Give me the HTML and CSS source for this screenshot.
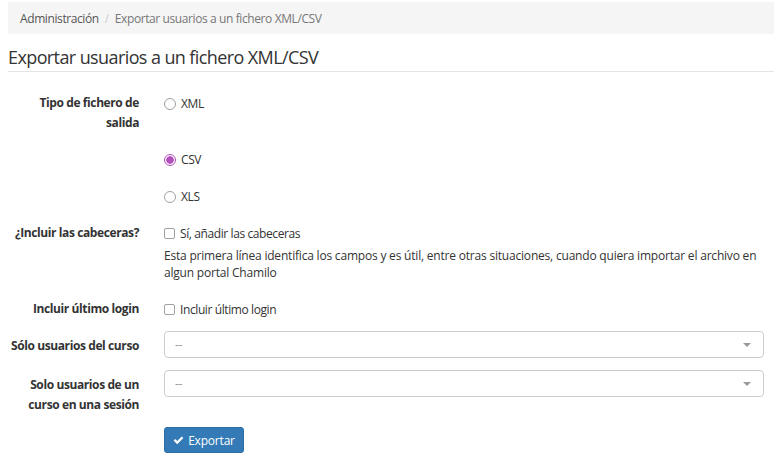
FILE: index.html
```html
<!DOCTYPE html>
<html>
<head>
    <title>Exportar usuarios a un fichero XML/CSV</title>
    <link rel="stylesheet" href="styles.css">
</head>
<body>
    <div class="page">
        <ol class="breadcrumb">
            <li><a href="#">Administración</a></li>
            <li class="active">Exportar usuarios a un fichero XML/CSV</li>
        </ol>

        <h2 class="page-title">Exportar usuarios a un fichero XML/CSV</h2>

        <form class="export-form" action="#" method="POST">
            <div class="form-group tall">
                <label class="control-label">Tipo de fichero de salida</label>
                <div class="controls">
                    <label class="radio"><input type="radio" name="file_type" value="xml"> XML</label>
                </div>
            </div>
            <div class="form-group">
                <label class="control-label"></label>
                <div class="controls">
                    <label class="radio"><input type="radio" name="file_type" value="csv" checked> CSV</label>
                </div>
            </div>
            <div class="form-group">
                <label class="control-label"></label>
                <div class="controls">
                    <label class="radio"><input type="radio" name="file_type" value="xls"> XLS</label>
                </div>
            </div>
            <div class="form-group">
                <label class="control-label">¿Incluir las cabeceras?</label>
                <div class="controls">
                    <label class="checkbox"><input type="checkbox" name="addcsvheader"> Sí, añadir las cabeceras</label>
                    <p class="help-block">Esta primera línea identifica los campos y es útil, entre otras situaciones, cuando quiera importar el archivo en algun portal Chamilo</p>
                </div>
            </div>
            <div class="form-group short">
                <label class="control-label">Incluir último login</label>
                <div class="controls">
                    <label class="checkbox"><input type="checkbox" name="include_last_login"> Incluir último login</label>
                </div>
            </div>
            <div class="form-group select-row">
                <label class="control-label">Sólo usuarios del curso</label>
                <div class="controls">
                    <div class="select-box"><span>--</span><i class="caret"></i></div>
                </div>
            </div>
            <div class="form-group select-row">
                <label class="control-label">Solo usuarios de un curso en una sesión</label>
                <div class="controls">
                    <div class="select-box"><span>--</span><i class="caret"></i></div>
                </div>
            </div>
            <div class="form-group">
                <label class="control-label"></label>
                <div class="controls">
                    <button type="submit" class="btn-primary">
                        <svg width="11" height="9" viewBox="0 0 11 9"><path d="M0.6 4.6 L2.2 3 L4.2 5 L8.8 0.4 L10.4 2 L4.2 8.2 Z" fill="#fff"/></svg>
                        Exportar
                    </button>
                </div>
            </div>
        </form>
    </div>
</body>
</html>
```

FILE: styles.css
```css
body {
    font-family: "Open Sans", "Noto Sans", sans-serif;
    font-size: 12px;
    letter-spacing: -0.4px;
    color: #333;
    background-color: #ffffff;
    margin: 0;
    padding: 0;
}

.page {
    padding: 2px 1px 0 8px;
}

.breadcrumb {
    list-style: none;
    margin: 0;
    padding: 0 12px;
    height: 32px;
    display: flex;
    align-items: center;
    background-color: #f5f5f5;
    border-radius: 2px;
}

.breadcrumb li {
    color: #777;
}

.breadcrumb li a {
    color: #555;
    text-decoration: none;
}

.breadcrumb li + li::before {
    content: "/";
    color: #ccc;
    padding: 0 6px;
}

.page-title {
    font-size: 18px;
    font-weight: normal;
    letter-spacing: -0.6px;
    margin: 10px 0 0 0;
    padding-bottom: 1px;
    line-height: 26px;
    border-bottom: 1px solid #e5e5e5;
}

.export-form {
    margin-top: 21px;
}

.form-group {
    display: flex;
    margin-bottom: 16px;
}

.control-label {
    width: 131px;
    flex-shrink: 0;
    text-align: right;
    font-weight: bold;
    line-height: 20px;
}

.controls {
    margin-left: 25px;
    width: 600px;
}

.radio,
.checkbox {
    display: flex;
    align-items: center;
    line-height: 21px;
}

input[type="radio"],
input[type="checkbox"] {
    appearance: none;
    margin: 0 5px 0 0;
    width: 12px;
    height: 12px;
    border: 1px solid #a0a0a0;
    background: #fff;
}

input[type="radio"] {
    border-radius: 50%;
}

input[type="radio"]:checked {
    border-color: #b34fbf;
    background: radial-gradient(circle, #b34fbf 0 3.5px, #fff 4px);
}

input[type="checkbox"] {
    border-radius: 2px;
    width: 11px;
    height: 11px;
}

.help-block {
    margin: 3px 0 2px 0;
    line-height: 17px;
    letter-spacing: -0.2px;
}

.form-group.short {
    margin-bottom: 11px;
}

.select-row {
    margin-bottom: 12px;
}

.select-row .control-label {
    padding-top: 5px;
}

.select-box {
    height: 27px;
    box-sizing: border-box;
    border: 1px solid #ccc;
    border-radius: 4px;
    display: flex;
    align-items: center;
    justify-content: space-between;
    padding: 0 12px 0 10px;
    color: #999;
}

.caret {
    width: 0;
    height: 0;
    border-left: 4px solid transparent;
    border-right: 4px solid transparent;
    border-top: 4px solid #999;
}

.btn-primary {
    background-color: #337ab7;
    border: 1px solid #2e6da4;
    border-radius: 3px;
    color: white;
    font-family: inherit;
    font-size: 12px;
    letter-spacing: -0.2px;
    height: 26px;
    width: 80px;
    padding: 0;
    display: flex;
    align-items: center;
    justify-content: center;
    gap: 4px;
    cursor: pointer;
}
```
